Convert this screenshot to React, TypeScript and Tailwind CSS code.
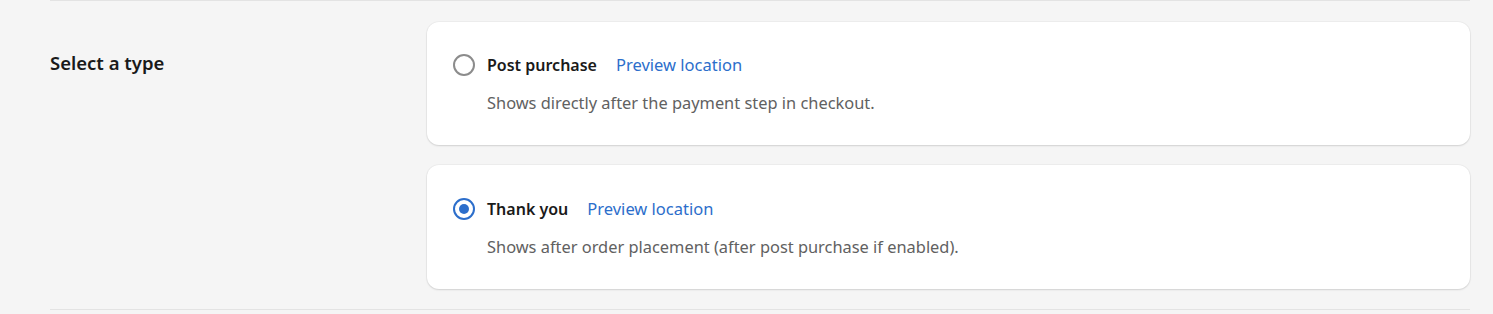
import React from "react";

type Option = {
  title: string;
  description: string;
  checked: boolean;
};

const options: Option[] = [
  {
    title: "Post purchase",
    description: "Shows directly after the payment step in checkout.",
    checked: false,
  },
  {
    title: "Thank you",
    description: "Shows after order placement (after post purchase if enabled).",
    checked: true,
  },
];

function Radio({ checked }: { checked: boolean }) {
  if (checked) {
    return (
      <span className="flex h-[22px] w-[22px] shrink-0 items-center justify-center rounded-full border-2 border-[#2c6ecb] bg-white">
        <span className="h-[10px] w-[10px] rounded-full bg-[#2c6ecb]" />
      </span>
    );
  }
  return (
    <span className="h-[22px] w-[22px] shrink-0 rounded-full border-2 border-[#8c8c8c] bg-white" />
  );
}

function OptionCard({ option }: { option: Option }) {
  // the selected card sits a pixel taller in the reference
  const box = option.checked ? "h-[124px] pt-[33px]" : "h-[123px] pt-[32px]";
  return (
    <div
      className={`${box} rounded-[12px] bg-white pl-[26px] shadow-[0_1px_2px_rgba(0,0,0,0.12),0_0_0_1px_rgba(0,0,0,0.03)]`}
    >
      <div className="flex h-[22px] items-center">
        <Radio checked={option.checked} />
        <span className="ml-[12px] text-[16px] leading-[22px] font-semibold text-[#1a1a1a]">
          {option.title}
        </span>
        <a className="ml-[19px] text-[16.5px] leading-[22px] text-[#2c6ecb]" href="#">
          Preview location
        </a>
      </div>
      <p className="mt-[15px] pl-[34px] text-[16.4px] leading-[24px] text-[#616161]">
        {option.description}
      </p>
    </div>
  );
}

export default function App() {
  return (
    <div
      className="h-[314px] w-[1493px] bg-[#f5f5f5] pl-[50px] pr-[23px]"
      style={{ fontFamily: '"Noto Sans", "Open Sans", sans-serif' }}
    >
      <div className="border-t border-[#e3e3e3] pb-[20px] pt-[21px]">
        <div className="flex">
          <div className="w-[377px] shrink-0 pt-[29px]">
            <h2 className="text-[18.5px] leading-[24px] font-semibold text-[#1a1a1a]">
              Select a type
            </h2>
          </div>
          <div className="flex flex-1 flex-col gap-[20px]">
            {options.map((o) => (
              <OptionCard key={o.title} option={o} />
            ))}
          </div>
        </div>
      </div>
      <div className="border-t border-[#e3e3e3]" />
    </div>
  );
}
